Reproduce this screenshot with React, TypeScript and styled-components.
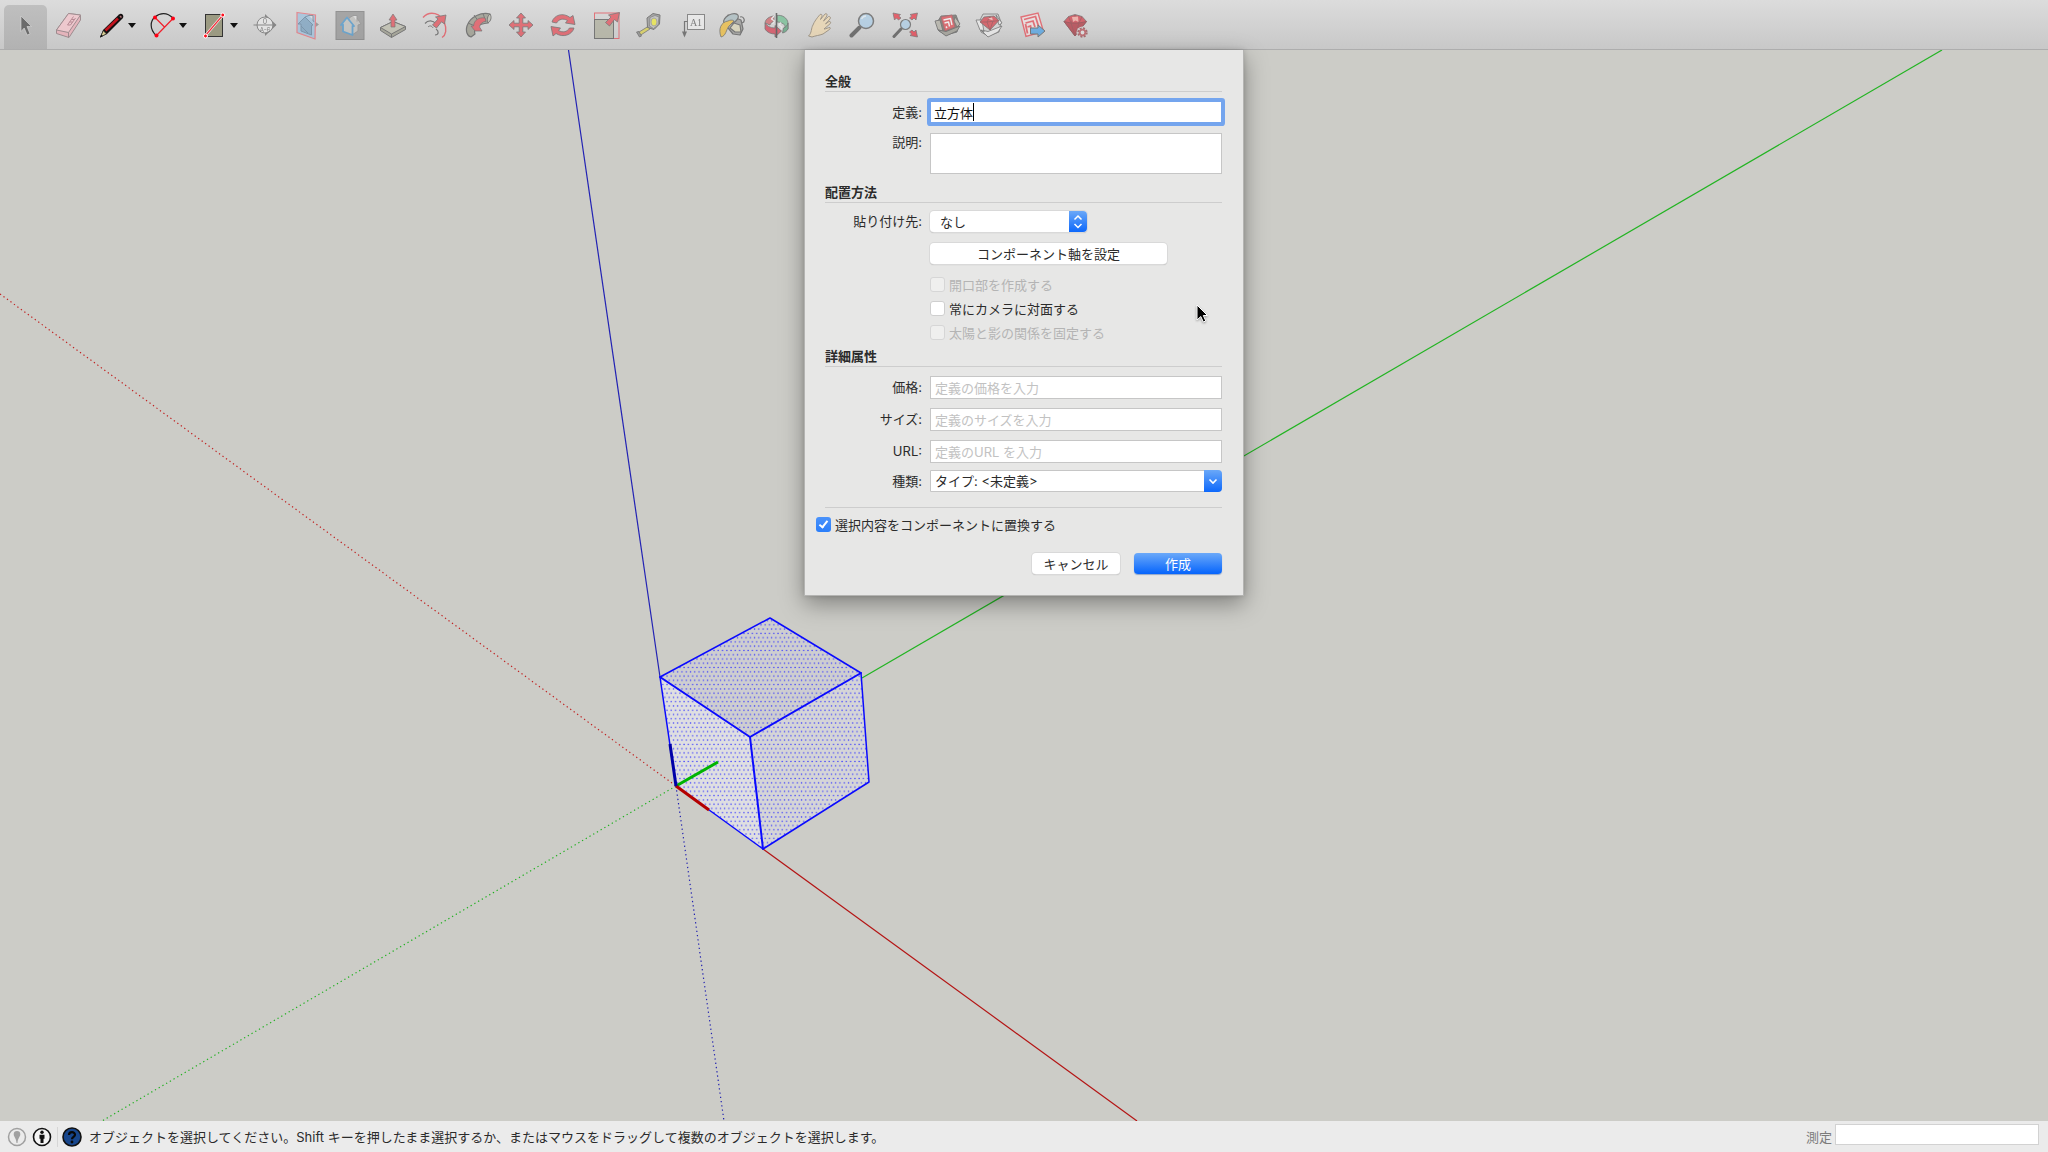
import React, { useState } from "react";
import styled, { createGlobalStyle, css } from "styled-components";

const FONT = `Inter, "Noto Sans CJK JP", sans-serif`;

const GlobalStyle = createGlobalStyle`
  *, *::before, *::after { box-sizing: border-box; }
  body { margin: 0; font-family: ${FONT}; font-size: 13px; color: #2b2b2b; }
  button, input, select, textarea { font: inherit; color: inherit; margin: 0; }
`;

const Window = styled.div`
  display: flex;
  flex-direction: column;
  min-height: 100vh;
  background: #ccccc7;
`;

/* ---------- Toolbar ---------- */

const Toolbar = styled.header`
  display: flex;
  height: 50px;
  padding: 5px 4px 0;
  background: linear-gradient(#dcdcdc, #c8c8c8);
  border-bottom: 1px solid #adadad;
`;

const ToolGroup = styled.div`
  display: grid;
  grid-template-columns: repeat(20, minmax(0, 1fr));
  width: 854px;
`;

const ToolButton = styled.button<{ $active?: boolean; $menu?: boolean }>`
  display: flex;
  align-items: flex-start;
  justify-content: ${(p) => (p.$menu ? "flex-start" : "center")};
  width: ${(p) => (p.$menu ? "51px" : "43px")};
  height: 44px;
  padding: ${(p) => (p.$menu ? "4px 0 0 6px" : "4px 0 0")};
  border: 0;
  border-radius: 5px 5px 0 0;
  background: ${(p) => (p.$active ? "linear-gradient(#bfbfbf, #b2b2b2)" : "transparent")};
`;

const ToolIcon = styled.svg<{ $faded?: boolean }>`
  flex: none;
  width: 32px;
  height: 32px;
  opacity: ${(p) => (p.$faded ? 0.6 : 1)};
  overflow: visible;
`;

const MenuCaret = styled.span`
  margin-top: 14px;
  border: 4px solid transparent;
  border-top: 5px solid #111;
  border-bottom: 0;
`;

type Tool = { name: string; art: React.ReactNode; faded?: boolean; menu?: boolean; active?: boolean };

const RED = "#e8303c";
const INK = "#3c3c3c";

const House = ({ fill, stroke }: { fill: string; stroke: string }) => (
  <g strokeLinejoin="round">
    <path d="M15 9 L20 6 L23 9 L27 15 L24 16 V22 L18 26 L15 22Z" fill="#b9b9b5" stroke="#777" strokeWidth="1" />
    <path d="M19 6.500h4v6" fill="#e2e2e2" stroke="#777" />
    <path d="M7 16 L13 8.500 L20 17 L18.500 17 L18.500 26 L9 22.500 V15.500Z" fill={fill} stroke={stroke} strokeWidth="1.800" />
  </g>
);

const drawTools: Tool[] = [
  {
    name: "選択",
    active: true,
    art: <path d="M11 7 L21.500 17.500 H17 L20 24.800 L17.200 26 L14.200 19 L11 22.500Z" fill="#6b6b6b" stroke="#ddd" strokeWidth=".6" />,
  },
  {
    name: "消しゴム",
    faded: true,
    art: (
      <g stroke="#7c5f64" strokeWidth="1" strokeLinejoin="round">
        <path d="M3.500 21 L15.500 4.500 L27.500 6 L27.500 11 L16 28.500 L3.500 24.500Z" fill="#f3a3b0" />
        <path d="M3.500 21 L15.500 23.500 L27.500 6 L15.500 4.500Z" fill="#ffc3cc" />
        <path d="M15.500 23.500 V28.500" />
        <path d="M14.500 16 L20.500 7.500 M17.500 16 L22.500 9 M14.500 16 h3 M16.500 13 h3 M18.500 10.500 h3" stroke="#a5596a" />
      </g>
    ),
  },
  {
    name: "線",
    menu: true,
    art: (
      <g>
        <path d="M4 28.500 L7 21 L23 5.500 Q25 4 27 6 Q28 8 26.500 9.500 L11 25Z" fill="#151010" />
        <path d="M9.500 21.500 L22 9.500" stroke="#c4141e" strokeWidth="2.600" />
        <path d="M4.500 28 L7.300 21.800 L10.400 24.800Z" fill="#d8cf95" stroke="#222" strokeWidth=".6" />
        <path d="M4 28.500 L5.300 25.500 L7 27Z" fill="#111" />
        <path d="M24 7 L25.500 8.500" stroke="#b4777b" strokeWidth="1.500" />
      </g>
    ),
  },
  {
    name: "円弧",
    menu: true,
    art: (
      <g fill="none">
        <path d="M9 26.500 C2.500 20 3 12 8 8 C13 3.500 20 3 26 9" stroke="#222" strokeWidth="1.200" />
        <path d="M9.500 26.500 L26 9.500 M8 8.500 L17.500 18" stroke="#f0202c" strokeWidth="1.200" />
        <circle cx="8" cy="8.500" r="2" fill="#ff0014" />
        <circle cx="26" cy="9.500" r="2" fill="#ff0014" />
        <circle cx="9.500" cy="26.500" r="2" fill="#ff0014" />
      </g>
    ),
  },
  {
    name: "長方形",
    menu: true,
    art: (
      <g>
        <rect x="7.500" y="5.500" width="17" height="22" fill="#9b9a82" stroke="#333" />
        <path d="M7 27 L25 6" stroke="#fff" strokeWidth="2.600" />
        <path d="M7 27 L25 6" stroke="#f0303c" strokeWidth="1.200" />
        <circle cx="7.500" cy="27" r="2" fill="#ff1020" stroke="#fff" />
        <circle cx="24.800" cy="6" r="2" fill="#ff1020" stroke="#fff" />
      </g>
    ),
  },
];

const modelTools: Tool[] = [
  {
    name: "断面平面",
    faded: true,
    art: (
      <g>
        <path d="M16 5 L27.500 16 L16 27Z" fill="#555" />
        <circle cx="16" cy="16" r="8" fill="#eee" stroke="#555" />
        <path d="M4.500 16 H27" stroke="#555" />
        <text x="16" y="14.500" fontSize="7" textAnchor="middle" fill="#444" fontFamily="Inter, sans-serif">0</text>
        <text x="16" y="22.500" fontSize="6" textAnchor="middle" fill="#444" fontFamily="Inter, sans-serif">A-6</text>
      </g>
    ),
  },
  {
    name: "断面平面を表示",
    faded: true,
    art: (
      <g>
        <path d="M22 11 L28 15.500 L22 20Z" fill="#777" />
        <path d="M6 3.500 L24.500 6 L24 30 L6 23.500Z" fill="#90bde0" stroke="#ee5560" strokeWidth="1.200" />
        <path d="M7 15 L14 8 L22 16 L20.500 16.500 V26 L10 22 V15Z" fill="#6496bd" stroke="#456f92" />
        <path d="M14 8 L19 6 L23 13 M10 17 L17 24" fill="none" stroke="#456f92" />
        <path d="M18 6.500h4v5" fill="#d4e2ee" stroke="#667" />
      </g>
    ),
  },
  {
    name: "断面カットを表示",
    faded: true,
    art: (
      <g>
        <rect x="2" y="2.500" width="28" height="28" fill="#858585" stroke="#666" />
        <House fill="#bcbcb8" stroke="#2a86c8" />
      </g>
    ),
  },
  {
    name: "プッシュ/プル",
    faded: true,
    art: (
      <g stroke={INK} strokeWidth="1" strokeLinejoin="round">
        <path d="M3.500 18.500 L16 12.500 L28.500 17.500 V20.500 L14.500 28.500 L3.500 21.500Z" fill="#8c8c78" />
        <path d="M3.500 18.500 L16 12.500 L28.500 17.500 L14.500 25Z" fill="#b9b9a4" />
        <path d="M14.500 25v3.500" />
        <path d="M16 5 L20 11 H18 V18 H14 V11 H12Z" fill={RED} strokeWidth=".7" />
      </g>
    ),
  },
  {
    name: "オフセット",
    faded: true,
    art: (
      <g fill="none">
        <path d="M4 8.500 C11 1 22 4 25.500 14 C28 20 27 26 23 28.500" stroke={RED} strokeWidth="1.400" />
        <path d="M6 14.500 C9 11 14 11 17 15 M17 20 C20 22 20 26 16 26" stroke={INK} strokeWidth="1.200" />
        <path d="M9 18 C11 16 13 17 14 19" stroke={INK} />
        <path d="M27 6 L25.500 15 L22.500 12.800 L17.500 19 L13.500 16 L19 10 L16.500 8Z" fill={RED} stroke={INK} strokeWidth=".8" />
      </g>
    ),
  },
  {
    name: "フォローミー",
    faded: true,
    art: (
      <g strokeLinejoin="round">
        <path d="M28 5 C20 3 8 7 5 17 C3.500 22 5 27 9 28 L13 25 C11 19 16 15 26 14Z" fill="#8b8b79" stroke={INK} strokeWidth="1.200" />
        <path d="M12 6 L17 13 M6 14 L13 17 M21 4.500 L24 13" stroke={INK} />
        <path d="M28 5 C25 7 25 11 26 14 C29 12 30 8 28 5Z" fill="#b9b9a6" stroke={INK} />
        <path d="M23 9 C17 8 12 11 11.500 17 L9 17 L13 22 L20 22 L17.500 18 C18 15 20 13 24 12Z" fill={RED} stroke={INK} strokeWidth=".7" />
      </g>
    ),
  },
  {
    name: "移動",
    faded: true,
    art: (
      <path
        d="M16 4 L20.500 9 H17.800 V14.200 H23 V11.500 L28 16 L23 20.500 V17.800 H17.800 V23 H20.500 L16 28 L11.500 23 H14.200 V17.800 H9 V20.500 L4 16 L9 11.500 V14.200 H14.200 V9 H11.500Z"
        fill={RED}
        stroke={INK}
        strokeWidth=".8"
        strokeLinejoin="round"
      />
    ),
  },
  {
    name: "回転",
    faded: true,
    art: (
      <g fill={RED} stroke={INK} strokeWidth=".8" strokeLinejoin="round">
        <path d="M5 13 C7 6 16 3 23 8.500 L26 6.500 L28 15.500 L18.500 14 L20.500 11.500 C16 9 12 10 9.500 14Z" />
        <path d="M27 19 C25 26 16 29 9 24.500 L6 27 L4 17.500 L13.500 19 L11.500 21.500 C16 24 20 23 22.500 19Z" />
      </g>
    ),
  },
  {
    name: "尺度",
    faded: true,
    art: (
      <g>
        <rect x="4.500" y="4" width="24.500" height="25.500" fill="none" stroke={RED} />
        <rect x="4.500" y="10.500" width="19" height="19" fill="#a8a892" stroke={INK} />
        <path d="M29.500 3.500 L27.500 13 L24.500 10.500 L19.500 17 L15.500 13.500 L21 8 L18.500 6Z" fill={RED} stroke={INK} strokeWidth=".8" />
      </g>
    ),
  },
  {
    name: "メジャー",
    faded: true,
    art: (
      <g strokeLinejoin="round">
        <path d="M4.500 24 L15 17.500 L17 20 L7 26.500Z" fill="#ddd030" stroke={INK} strokeWidth=".8" />
        <path d="M3.500 23 L6 22.500 L8.500 27 L6.500 28Z" fill="#777" stroke={INK} strokeWidth=".8" />
        <path d="M14 9 L20 4.500 L27 6 L26.500 15 L21 20.500 L14.500 18.500Z" fill="#888" stroke={INK} />
        <path d="M17 8.500 L22 6.500 L26 8 L25 16 L20.500 19.500 L16.500 17Z" fill="#bbb" stroke={INK} strokeWidth=".6" />
        <ellipse cx="21" cy="13" rx="3" ry="4" fill="#f4ef18" stroke="#888" />
      </g>
    ),
  },
  {
    name: "テキスト",
    faded: true,
    art: (
      <g>
        <rect x="11.500" y="5.500" width="17" height="15" fill="#f4f4f4" stroke="#555" />
        <text x="20" y="16.500" fontSize="10" textAnchor="middle" fill="#444" fontFamily="Liberation Serif, serif">A1</text>
        <path d="M11.500 12.500 H8.500 V24" fill="none" stroke={INK} strokeWidth="1.200" />
        <path d="M6 22.500 H11 L8.500 28.500Z" fill={INK} />
      </g>
    ),
  },
  {
    name: "ペイント",
    faded: true,
    art: (
      <g stroke={INK} strokeWidth="1.200" strokeLinejoin="round">
        <path d="M22 8 a3 3 0 1 1 2 6" fill="none" />
        <path d="M10 6 L23 11 L25 20 L22 26 L15 25 L6 14Z" fill="#8f8f8c" />
        <path d="M16 14 L22 16 L23 23 L17 23 L12 19Z" fill="#ddd6b2" />
        <ellipse cx="13" cy="10" rx="8" ry="4.500" transform="rotate(-28 13 10)" fill="#9fb6bb" />
        <path d="M10 12 C3 13 0 20 3 28 C8 27 8 21 11 17 L16 12 C14 10.500 12 11 10 12Z" fill="#f5b718" strokeWidth=".8" />
      </g>
    ),
  },
  {
    name: "オービット",
    faded: true,
    art: (
      <g stroke={INK} strokeWidth=".8" strokeLinejoin="round">
        <path d="M16 6.500 C21 5.500 26.500 9 27 14 V20 L24 21.500 V16.500 C22 14 19 13 16 13Z" fill="#5cba83" />
        <path d="M13 7 C8 7.500 4.500 10 4 14 L9 16 C9.500 14 11 13 13 12.500Z" fill="#cf4b52" />
        <path d="M13 7 L10.500 10 L13.500 12 L11.500 15 M20 13.500 L18 16 L21 18 L19.500 21" fill="none" stroke="#f4f4f4" strokeWidth="1.300" />
        <path d="M4 14 V20 C6 23.500 10 25 14 25 V28 L20.500 22 L14 16.500 V19 C9 19 6 17 4 14Z" fill="#d71f37" />
        <path d="M27 14 V20 C26 22 24 23.500 21.500 24 L22.500 19 C25 18 26.500 16.500 27 14Z" fill="#3f9a68" />
        <path d="M15.500 4 V29" stroke="#222" strokeWidth="1.600" />
      </g>
    ),
  },
  {
    name: "パン表示",
    faded: true,
    art: (
      <path
        d="M4.500 27 C8 24 7 19 9 16 C10 13 13 9 16 5.500 C17.500 4.500 18.500 6 17.800 7.500 L16.500 10.500 L21 5 C22.500 4 23.700 5.300 22.800 7 L19.500 12 L24.500 7.500 C26 7 27 8.500 26 10 L21.500 15 L25 12.500 C26.500 12 27.200 13.500 26.200 14.700 L20 20 C22 20 24 18.500 26 18.500 C27 19.500 25.500 20.500 24 21.500 L19 25 C15 26.500 12 26.500 8 28Z"
        fill="#f4d9a8"
        stroke="#75654e"
        strokeWidth=".9"
        strokeLinejoin="round"
      />
    ),
  },
  {
    name: "ズーム",
    faded: true,
    art: (
      <g>
        <path d="M5.500 26.500 L13.500 18.500" stroke="#333" strokeWidth="4" strokeLinecap="round" />
        <circle cx="20" cy="12" r="7.500" fill="#a4cdec" stroke="#444" strokeWidth="1.500" />
        <path d="M15.500 10 C16.500 8 18 7 20 7" fill="none" stroke="#e6f3fc" strokeWidth="1.300" />
      </g>
    ),
  },
  {
    name: "全体表示",
    faded: true,
    art: (
      <g>
        <path d="M5 27.500 L12 20" stroke="#333" strokeWidth="3" strokeLinecap="round" />
        <circle cx="16.500" cy="15.500" r="5" fill="#a4cdec" stroke="#444" strokeWidth="1.200" />
        <g fill="#ec1628" stroke={INK} strokeWidth=".7" strokeLinejoin="round">
          <path d="M4 4 L11.500 5.500 L9.800 7 L12 9 L9.500 11 L7.500 9 L5.500 11Z" />
          <path d="M28.500 4 L21 5.500 L22.700 7 L20.500 9 L23 11 L25 9 L27 11Z" />
          <path d="M28.500 28 L21 26.500 L22.700 25 L20.500 23 L23 21 L25 23 L27 21Z" />
        </g>
      </g>
    ),
  },
  {
    name: "3D Warehouse",
    faded: true,
    art: (
      <g stroke={INK} strokeWidth=".9" strokeLinejoin="round">
        <path d="M6 12 L9 7 L24 6 L27 14 L25 23 L14 26 L7 22Z" fill="#55534a" />
        <path d="M3 12 L8 11 L11 22 L6 21Z M23 8 L28 15 L25 18 L22 12Z" fill="#aaa79a" />
        <path d="M9 8 L20 6 L23 18 L13 22Z" fill="#e02c35" stroke="#8a3035" />
        <path d="M11.500 11 L18.500 9.500 L20 16 M12.500 14 L16.500 13 L17.500 17.500 M14 17.500 L15 19" fill="none" stroke="#fff" strokeWidth="1.400" />
        <path d="M6 21 L14 22.500 L28 17 L25 22 L14 27Z" fill="#8e8c80" />
      </g>
    ),
  },
  {
    name: "Extension Warehouse",
    faded: true,
    art: (
      <g stroke={INK} strokeWidth=".8" strokeLinejoin="round">
        <path d="M5 13 L9 5 L24 5 L27 13 L25 23 L14 27 L7 23Z" fill="#d4d4d4" />
        <path d="M2 11 L8 11 L10 23 L6 21Z M22 6 L28 14 L25 16Z M7 21 L14 22.500 L28 17 L24 23 L14 28Z" fill="#f3f3f3" />
        <path d="M6 13 L10 8 L20 7 L25 11.500 L16 21Z" fill="#d8232f" />
        <path d="M6 13 L13 13 L25 11.500 M13 13 L16 21 L19 12 L16 7.500 L13 13" fill="none" stroke="#7e1a22" />
        <path d="M14 9.500 l4 -1 l1 3z" fill="#ffb7b0" stroke="none" />
      </g>
    ),
  },
  {
    name: "LayOut に送信",
    faded: true,
    art: (
      <g>
        <path d="M4 8 L21 4 L26.500 22.500 L9 27.500Z" fill="#f4e8e8" stroke={RED} strokeWidth="1.400" />
        <path d="M7 10.500 L18.500 7.500 L22 19 M8.500 14 L16 12 L18 18 M10.500 18 L13.500 17 L14 20 M10.500 24.500 L8.500 15" fill="none" stroke={RED} strokeWidth="1.800" />
        <path d="M13.500 19 H21 V16 L28 22 L21 28 V25 H13.500Z" fill="#2f97ea" stroke={INK} />
      </g>
    ),
  },
  {
    name: "拡張機能マネージャー",
    faded: true,
    art: (
      <g stroke={INK} strokeWidth=".8" strokeLinejoin="round">
        <path d="M4 12.500 L8.500 7.500 L15 5.500 L22 7.500 L26.500 12.500 L15 27Z" fill="#d21c2a" />
        <path d="M4 12.500 L11 14 L19 14 L26.500 12.500 L15 27Z" fill="#a8101d" stroke="#6e1018" />
        <path d="M11 14 L15 27 L19 14 L15 6Z M8.500 7.500 L11 14 M22 7.500 L19 14" fill="none" stroke="#7c1620" />
        <path d="M12 8 L18 7.500 L18.500 13 L15.500 11.500 L13 13Z" fill="#ff9d94" stroke="none" />
        <circle cx="22.500" cy="23.500" r="6" fill="#cfcfcf" stroke="none" />
        <circle cx="22.500" cy="23.500" r="4.200" fill="none" stroke="#8a2c32" strokeWidth="2" strokeDasharray="1.900 1.400" />
        <circle cx="22.500" cy="23.500" r="2.800" fill="#e4e4e4" stroke="#b0343c" strokeWidth="1.800" />
      </g>
    ),
  },
];

const ToolItem = ({ tool }: { tool: Tool }) => (
  <ToolButton type="button" aria-label={tool.name} $active={tool.active} $menu={tool.menu}>
    <ToolIcon viewBox="0 0 32 32" $faded={tool.faded} aria-hidden="true">
      {tool.art}
    </ToolIcon>
    {tool.menu && <MenuCaret />}
  </ToolButton>
);

/* ---------- Model viewport ---------- */

const Workspace = styled.main`
  position: relative;
  flex: 1;
  display: flex;
  justify-content: center;
  align-items: flex-start;
`;

const Scene = styled.svg`
  position: absolute;
  inset: 0;
  width: 100%;
  height: 100%;
`;

const ModelScene = () => (
  <Scene viewBox="0 50 2048 1071" preserveAspectRatio="xMidYMid slice" aria-hidden="true">
    <defs>
      <pattern id="selection" width="4.270" height="8.540" patternUnits="userSpaceOnUse">
        <rect x=".3" y=".8" width="1.200" height="1.200" fill="#3030ff" />
        <rect x="2.430" y="5.070" width="1.200" height="1.200" fill="#3030ff" />
      </pattern>
    </defs>
    <g fill="none" strokeWidth="1.200">
      <path d="M568.500 50 L660 677" stroke="#2222b4" />
      <path d="M862 678 L1942 50" stroke="#22b422" />
      <path d="M763 849 L1137 1121" stroke="#b41414" />
      <g strokeDasharray="1.300 3">
        <path d="M0 294 L676 786" stroke="#c02020" />
        <path d="M676 786 L102 1121" stroke="#20b020" />
        <path d="M676 786 L724 1121" stroke="#2020b0" />
      </g>
    </g>
    <path d="M660 677 L770 618 L861 673 L750 737Z" fill="#ceced0" />
    <path d="M660 677 L750 737 L763 849 L676 786Z" fill="#dfdfe1" />
    <path d="M750 737 L861 673 L869 782 L763 849Z" fill="#d5d5d7" />
    <path d="M660 677 L770 618 L861 673 L869 782 L763 849 L676 786Z" fill="url(#selection)" />
    <g fill="none" stroke="#0a0aff" strokeLinejoin="round" strokeLinecap="round">
      <path d="M660 677 L770 618 L861 673 L869 782 L763 849 L676 786Z" strokeWidth="1.500" />
      <path d="M660 677 L750 737 L861 673 M750 737 L763 849" strokeWidth="2" />
    </g>
    <g fill="none" strokeWidth="3">
      <path d="M676 786 L718 762" stroke="#00b400" />
      <path d="M676 786 L709 810" stroke="#b40000" />
      <path d="M670 744 L676 786" stroke="#0000a8" />
    </g>
  </Scene>
);

const Pointer = styled.svg`
  position: absolute;
  left: calc(50% + 172px);
  top: 254px;
  width: 14px;
  height: 20px;
  filter: drop-shadow(0 1px 1px rgba(0, 0, 0, 0.35));
`;

/* ---------- Component dialog ---------- */

const Dialog = styled.form`
  position: relative;
  width: 440px;
  padding: 22px 21px 21px 20px;
  background: #e7e7e6;
  border: 1px solid #b4b4b2;
  border-top: 0;
  box-shadow: 0 8px 22px rgba(0, 0, 0, 0.36), 0 0 5px rgba(0, 0, 0, 0.16);
`;

const SectionTitle = styled.h2`
  margin: 0;
  height: 20px;
  line-height: 19px;
  font-size: 13px;
  font-weight: 700;
  border-bottom: 1px solid #cdcdcd;
`;

const Fields = styled.div<{ $gap: number; $start: number; $end?: number }>`
  display: flex;
  flex-direction: column;
  gap: ${(p) => p.$gap}px;
  padding: ${(p) => p.$start}px 0 ${(p) => p.$end ?? 0}px;
`;

const Row = styled.div`
  display: grid;
  grid-template-columns: 97px minmax(0, 1fr);
  column-gap: 8px;
`;

const FieldLabel = styled.label<{ $line?: number }>`
  line-height: ${(p) => p.$line ?? 22}px;
  text-align: right;
`;

const Indented = styled.div`
  padding-left: 105px;
`;

const boxStyle = css`
  display: block;
  width: 100%;
  border: 1px solid #c6c6c6;
  border-radius: 0;
  background: #fff;
  outline: none;
`;

const TextInput = styled.input`
  ${boxStyle}
  height: 23px;
  padding: 0 4px;
  &::placeholder { color: #c2c2c2; opacity: 1; }
`;

const FocusField = styled.div`
  position: relative;
  height: 22px;
  border-radius: 1px;
  box-shadow: 0 0 0 3px #74a5ee;
`;

const NameInput = styled.input`
  ${boxStyle}
  height: 22px;
  padding: 0 3px;
  border-color: #74a5ee;
  color: #111;
  caret-color: transparent;
`;

const Caret = styled.span`
  position: absolute;
  left: 43px;
  top: 2px;
  width: 1px;
  height: 18px;
  background: #000;
`;

const Description = styled.textarea`
  ${boxStyle}
  height: 41px;
  resize: none;
`;

const SelectWrap = styled.div<{ $width: string; $height: number }>`
  position: relative;
  width: ${(p) => p.$width};
  height: ${(p) => p.$height}px;
`;

const PopupSelect = styled.select`
  display: block;
  width: 100%;
  height: 100%;
  padding: 0 24px 0 10px;
  appearance: none;
  border: 0;
  border-radius: 4px;
  background: #fff;
  box-shadow: 0 0 0 1px #d9d9d9, 0 1px 1px #aaa;
`;

const ComboSelect = styled.select`
  ${boxStyle}
  height: 100%;
  padding: 0 24px 0 4px;
  appearance: none;
  border-radius: 0 4px 4px 0;
`;

const SelectBadge = styled.svg`
  position: absolute;
  top: 0;
  right: 0;
  width: 18px;
  height: 100%;
  border-radius: 0 4px 4px 0;
  background: linear-gradient(#6aa8f8, #0d68fb);
  pointer-events: none;
`;

const PushButton = styled.button<{ $width: number; $primary?: boolean }>`
  display: block;
  width: ${(p) => p.$width}px;
  height: 21px;
  padding: 0;
  border: 0;
  border-radius: 4px;
  line-height: 20px;
  color: ${(p) => (p.$primary ? "#fff" : "inherit")};
  background: ${(p) => (p.$primary ? "linear-gradient(#6ba9f9, #0564fc)" : "#fff")};
  box-shadow: ${(p) => (p.$primary ? "0 1px 1px #8fa5c8" : "0 0 0 1px #d9d9d9, 0 1px 1px #aaa")};
`;

const CheckLabel = styled.label<{ $muted?: boolean }>`
  display: flex;
  align-items: center;
  gap: 4px;
  height: 24px;
  color: ${(p) => (p.$muted ? "#b4b4b4" : "inherit")};
`;

const CheckInput = styled.input`
  appearance: none;
  flex: none;
  width: 15px;
  height: 15px;
  border: 1px solid #cfcfcf;
  border-radius: 3px;
  background: #fff;
  &:disabled { background: #efefee; border-color: #d6d6d6; }
  &:checked { border: 0; background: linear-gradient(#4b93fb, #2a7efa); }
  &:checked::before {
    content: "";
    display: block;
    width: 5px;
    height: 9px;
    margin: 2px 0 0 5px;
    border: solid #fff;
    border-width: 0 2px 2px 0;
    transform: rotate(38deg);
  }
`;

const Checks = styled(Indented)`
  padding-top: 8px;
  padding-bottom: 3px;
`;

const ReplaceRow = styled.div`
  margin-left: -9px;
  padding-top: 4px;
`;

const Rule = styled.hr`
  margin: 15px 0 0;
  border: 0;
  border-top: 1px solid #cdcdcd;
`;

const Actions = styled.div`
  display: flex;
  justify-content: flex-end;
  gap: 14px;
  padding-top: 17px;
`;

const ComponentDialog = () => {
  const [name, setName] = useState("立方体");
  const [replace, setReplace] = useState(true);
  const [face, setFace] = useState(false);
  return (
    <Dialog onSubmit={(e) => e.preventDefault()}>
      <SectionTitle>全般</SectionTitle>
      <Fields $gap={10} $start={9} $end={9}>
        <Row>
          <FieldLabel htmlFor="name">定義:</FieldLabel>
          <FocusField>
            <NameInput id="name" value={name} onChange={(e) => setName(e.target.value)} />
            <Caret />
          </FocusField>
        </Row>
        <Row>
          <FieldLabel htmlFor="description" $line={18}>説明:</FieldLabel>
          <Description id="description" />
        </Row>
      </Fields>

      <SectionTitle>配置方法</SectionTitle>
      <Fields $gap={11} $start={8}>
        <Row>
          <FieldLabel htmlFor="glue" $line={21}>貼り付け先:</FieldLabel>
          <SelectWrap $width="157px" $height={21}>
            <PopupSelect id="glue">
              <option>なし</option>
            </PopupSelect>
            <SelectBadge viewBox="0 0 18 21" aria-hidden="true">
              <path d="M5.500 8.500 L9 5 L12.500 8.500 M5.500 13 L9 16.500 L12.500 13" fill="none" stroke="#fff" strokeWidth="1.500" />
            </SelectBadge>
          </SelectWrap>
        </Row>
        <Indented>
          <PushButton type="button" $width={237}>コンポーネント軸を設定</PushButton>
        </Indented>
      </Fields>
      <Checks>
        <CheckLabel $muted>
          <CheckInput type="checkbox" disabled />
          開口部を作成する
        </CheckLabel>
        <CheckLabel>
          <CheckInput type="checkbox" checked={face} onChange={(e) => setFace(e.target.checked)} />
          常にカメラに対面する
        </CheckLabel>
        <CheckLabel $muted>
          <CheckInput type="checkbox" disabled />
          太陽と影の関係を固定する
        </CheckLabel>
      </Checks>

      <SectionTitle>詳細属性</SectionTitle>
      <Fields $gap={9} $start={9}>
        <Row>
          <FieldLabel htmlFor="price">価格:</FieldLabel>
          <TextInput id="price" placeholder="定義の価格を入力" />
        </Row>
        <Row>
          <FieldLabel htmlFor="size">サイズ:</FieldLabel>
          <TextInput id="size" placeholder="定義のサイズを入力" />
        </Row>
        <Row>
          <FieldLabel htmlFor="url">URL:</FieldLabel>
          <TextInput id="url" placeholder="定義のURL を入力" />
        </Row>
      </Fields>
      <Fields $gap={9} $start={7}>
        <Row>
          <FieldLabel htmlFor="type">種類:</FieldLabel>
          <SelectWrap $width="100%" $height={22}>
            <ComboSelect id="type">
              <option>タイプ: &lt;未定義&gt;</option>
            </ComboSelect>
            <SelectBadge viewBox="0 0 18 22" aria-hidden="true">
              <path d="M5.500 9.500 L9 13 L12.500 9.500" fill="none" stroke="#fff" strokeWidth="1.600" />
            </SelectBadge>
          </SelectWrap>
        </Row>
      </Fields>

      <Rule />
      <ReplaceRow>
        <CheckLabel>
          <CheckInput type="checkbox" checked={replace} onChange={(e) => setReplace(e.target.checked)} />
          選択内容をコンポーネントに置換する
        </CheckLabel>
      </ReplaceRow>
      <Actions>
        <PushButton type="button" $width={88}>キャンセル</PushButton>
        <PushButton type="submit" $width={88} $primary>作成</PushButton>
      </Actions>
    </Dialog>
  );
};

/* ---------- Status bar ---------- */

const StatusBar = styled.footer`
  position: relative;
  display: flex;
  align-items: center;
  height: 31px;
  padding: 0 9px 0 7px;
  background: #ebebeb;
`;

const StatusButton = styled.button`
  display: flex;
  width: 20px;
  height: 20px;
  padding: 0;
  margin-right: 5px;
  border: 0;
  background: none;
`;

const StatusDivider = styled.span`
  width: 1px;
  height: 20px;
  margin-right: 4px;
  background: #d6d6d6;
`;

const Hint = styled.p`
  flex: 1;
  margin: 0 0 0 2px;
`;

const MeasureLabel = styled.label`
  margin-right: 3px;
  color: #7b7b7b;
`;

const MeasureInput = styled.input`
  ${boxStyle}
  width: 204px;
  height: 21px;
  margin-bottom: 5px;
  border-color: #d2d2d2;
`;

export default function App() {
  return (
    <>
      <GlobalStyle />
      <Window>
        <Toolbar>
          {drawTools.map((t) => (
            <ToolItem key={t.name} tool={t} />
          ))}
          <ToolGroup>
            {modelTools.map((t) => (
              <ToolItem key={t.name} tool={t} />
            ))}
          </ToolGroup>
        </Toolbar>
        <Workspace>
          <ModelScene />
          <ComponentDialog />
          <Pointer viewBox="0 0 14 20" aria-hidden="true">
            <path d="M1 1 L11.500 11.500 H7.300 L9.800 17 L7.300 18 L4.800 12.500 L1 16Z" fill="#000" stroke="#fff" strokeWidth="1" />
          </Pointer>
        </Workspace>
        <StatusBar>
          <StatusButton type="button" aria-label="位置情報">
            <svg width="20" height="20" viewBox="0 0 20 20">
              <circle cx="10" cy="10" r="8.500" fill="none" stroke="#a0a0a0" strokeWidth="1.500" />
              <path d="M10 4 a3.300 3.300 0 0 1 3.300 3.300 C13.300 9.800 10.800 11 10.500 16 H9.500 C9.200 11 6.700 9.800 6.700 7.300 A3.300 3.300 0 0 1 10 4Z" fill="#a0a0a0" />
            </svg>
          </StatusButton>
          <StatusButton type="button" aria-label="クレジット">
            <svg width="20" height="20" viewBox="0 0 20 20">
              <circle cx="10" cy="10" r="8.500" fill="#f4f4f4" stroke="#111" strokeWidth="1.600" />
              <circle cx="10" cy="5.300" r="1.700" fill="#111" />
              <path d="M7.500 7.700 H12.500 V11.800 H11.500 V16 H8.500 V11.800 H7.500Z" fill="#111" />
            </svg>
          </StatusButton>
          <StatusDivider />
          <StatusButton type="button" aria-label="ヘルプ">
            <svg width="20" height="20" viewBox="0 0 20 20">
              <circle cx="10" cy="10" r="9" fill="#17468c" stroke="#111" strokeWidth="1.600" />
              <path d="M7 8 C7 4.200 13 4.200 13 7.800 C13 10 10 10 10 12.300" fill="none" stroke="#080808" strokeWidth="2.200" />
              <circle cx="10" cy="15" r="1.400" fill="#080808" />
            </svg>
          </StatusButton>
          <Hint>
            オブジェクトを選択してください。Shift キーを押したまま選択するか、またはマウスをドラッグして複数のオブジェクトを選択します。
          </Hint>
          <MeasureLabel htmlFor="measure">測定</MeasureLabel>
          <MeasureInput id="measure" />
        </StatusBar>
      </Window>
    </>
  );
}
